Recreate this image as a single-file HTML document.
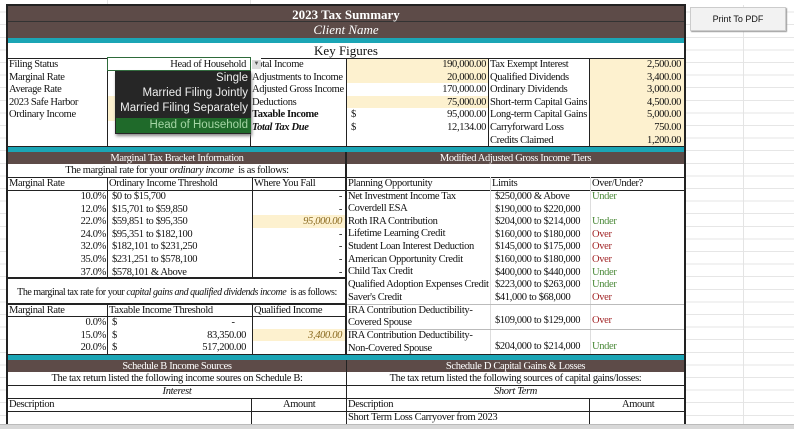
<!DOCTYPE html>
<html><head><meta charset="utf-8"><style>
body{margin:0;width:794px;height:429px;overflow:hidden;background:#fff;position:relative;font-family:"Liberation Serif",serif;font-size:10.5px;letter-spacing:-0.35px;color:#111}
div{position:absolute;box-sizing:border-box;white-space:nowrap}
.br{background:#5d4b48;color:#fff}
.tl{background:#1ba5b5}
.y{background:#fdf1cf}
.hl{border-top:1px solid #222}
.vl{border-left:1px solid #222}
.r{text-align:right}
.t{line-height:12px}
.g{color:#4c8a3a}.o{color:#a3282a}
.gl{background:#e4e4e4}
</style></head><body>
<div style="left:686px;top:0;width:108px;height:429px;background:repeating-linear-gradient(#fff 0 11.6px,#e6e6e6 11.6px 12.6px)"></div>
<div class="gl" style="left:743px;top:0;width:1px;height:429px"></div>
<div style="left:0;top:0;width:7px;height:429px;background:repeating-linear-gradient(#fff 0 11.6px,#e6e6e6 11.6px 12.6px)"></div>
<div style="left:0;top:0;width:794px;height:5px;background:#fff"></div>
<div style="left:107px;top:0;width:1px;height:5px;background:#e4e4e4"></div>
<div style="left:250px;top:0;width:1px;height:5px;background:#e4e4e4"></div>
<div style="left:690px;top:7px;width:96px;height:24px;background:#f2f2f2;border:1px solid #ccc;box-shadow:1px 1px 1px #999;font-family:'Liberation Sans',sans-serif;font-size:9px;letter-spacing:0;text-align:center;line-height:22px">Print To PDF</div>
<div style="left:6px;top:4px;width:680px;height:425px;border:2px solid #222;border-bottom:none"></div>
<div class="br" style="left:8px;top:6px;width:676px;height:16px;text-align:center;font-weight:bold;font-size:13px;letter-spacing:0;line-height:17px;border-bottom:1px solid #333">2023 Tax Summary</div>
<div class="br" style="left:8px;top:22px;width:676px;height:16px;text-align:center;font-style:italic;font-size:13px;letter-spacing:0;line-height:16px">Client Name</div>
<div class="tl" style="left:8px;top:38px;width:676px;height:5px"></div>
<div style="left:8px;top:43px;width:676px;height:15px;text-align:center;font-size:13px;letter-spacing:0;line-height:16px">Key Figures</div>
<div class="y" style="left:347px;top:58px;width:141px;height:25px"></div>
<div class="y" style="left:347px;top:96px;width:141px;height:12px"></div>
<div class="y" style="left:590px;top:58px;width:94px;height:89px"></div>
<div class="y" style="left:108px;top:96px;width:142px;height:25px"></div>
<div class="hl" style="left:8px;top:58px;width:676px;height:1px"></div>
<div class="vl" style="left:107px;top:58px;width:1px;height:89px"></div>
<div class="vl" style="left:250px;top:58px;width:1px;height:89px"></div>
<div class="vl" style="left:346px;top:58px;width:1px;height:89px"></div>
<div class="vl" style="left:488px;top:58px;width:1px;height:89px"></div>
<div class="vl" style="left:589px;top:58px;width:1px;height:89px"></div>
<div class="t" style="left:9px;top:59px;line-height:12.6px">Filing Status<br>Marginal Rate<br>Average Rate<br>2023 Safe Harbor<br>Ordinary Income</div>
<div class="t" style="left:252px;top:59px;line-height:12.6px">Total Income<br>Adjustments to Income<br>Adjusted Gross Income<br>Deductions<br><b>Taxable Income</b><br><b><i>Total Tax Due</i></b></div>
<div class="t" style="left:351px;top:109px;line-height:12.6px">$<br>$</div>
<div class="t r" style="left:347px;top:59px;width:139px;line-height:12.6px">190,000.00<br>20,000.00<br>170,000.00<br>75,000.00<br>95,000.00<br>12,134.00</div>
<div class="t" style="left:490px;top:59px;line-height:12.6px">Tax Exempt Interest<br>Qualified Dividends<br>Ordinary Dividends<br>Short-term Capital Gains<br>Long-term Capital Gains<br>Carryforward Loss<br>Credits Claimed</div>
<div class="t r" style="left:590px;top:59px;width:91px;line-height:12.6px">2,500.00<br>3,400.00<br>3,000.00<br>4,500.00<br>5,000.00<br>750.00<br>1,200.00</div>
<div style="left:107px;top:57px;width:144px;height:14px;border:1px solid #2e6b3a;background:#fff"></div>
<div class="t r" style="left:108px;top:59px;width:138px">Head of Household</div>
<div style="left:251px;top:58px;width:10px;height:12px;background:#fff"></div>
<div style="left:252px;top:60px;width:9px;height:9px;background:#ddd;font-size:6px;letter-spacing:0;text-align:center;line-height:9px;color:#555">▼</div>
<div style="left:115px;top:71px;width:136px;height:63px;background:#262626;box-shadow:1px 2px 3px #888"></div>
<div style="left:115px;top:71px;width:133px;font-family:'Liberation Sans',sans-serif;font-size:11.5px;letter-spacing:0;color:#eee;text-align:right;line-height:15px">Single<br>Married Filing Jointly<br>Married Filing Separately</div>
<div style="left:116px;top:118px;width:135px;height:15px;background:#1f6a2a;font-family:'Liberation Sans',sans-serif;font-size:11.5px;letter-spacing:0;color:#a5d6a5;text-align:right;padding-right:3px;line-height:15px">Head of Household</div>
<div class="hl" style="left:8px;top:146px;width:676px;height:1px"></div>
<div class="tl" style="left:8px;top:147px;width:676px;height:5px"></div>
<div class="br" style="left:8px;top:152px;width:338px;height:12px;text-align:center;line-height:13px">Marginal Tax Bracket Information</div>
<div class="br" style="left:347px;top:152px;width:337px;height:12px;text-align:center;line-height:13px">Modified Adjusted Gross Income Tiers</div>
<div style="left:345px;top:152px;width:2px;height:202px;background:#222"></div>
<div class="t" style="left:8px;top:165px;width:338px;text-align:center">The marginal rate for your <i>ordinary income</i> &nbsp;is as follows:</div>
<div style="left:8px;top:177px;width:676px;height:1px;background:#222"></div>
<div class="hl" style="left:8px;top:190px;width:676px;height:1px"></div>
<div class="vl" style="left:107px;top:177px;width:1px;height:101px"></div>
<div class="vl" style="left:252px;top:177px;width:1px;height:101px"></div>
<div class="vl" style="left:490px;top:177px;width:1px;height:177px;border-color:#ddd"></div>
<div class="vl" style="left:590px;top:177px;width:1px;height:177px;border-color:#ddd"></div>
<div class="y" style="left:253px;top:215px;width:92px;height:13px"></div>
<div class="t" style="left:9px;top:178px">Marginal Rate</div>
<div class="t" style="left:109px;top:178px">Ordinary Income Threshold</div>
<div class="t" style="left:254px;top:178px">Where You Fall</div>
<div class="t r" style="left:8px;top:191px;width:98px;line-height:12.6px">10.0%<br>12.0%<br>22.0%<br>24.0%<br>32.0%<br>35.0%<br>37.0%</div>
<div class="t" style="left:112px;top:191px;line-height:12.6px">$0 to $15,700<br>$15,701 to $59,850<br>$59,851 to $95,350<br>$95,351 to $182,100<br>$182,101 to $231,250<br>$231,251 to $578,100<br>$578,101 &amp; Above</div>
<div class="t r" style="left:253px;top:191px;width:89px;line-height:12.6px">-<br>-<br><i style="color:#8a6a20">95,000.00</i><br>-<br>-<br>-<br>-</div>
<div style="left:8px;top:277px;width:338px;height:2px;background:#222"></div>
<div class="t" style="left:8px;top:287px;width:338px;text-align:center;font-size:10px;letter-spacing:-0.45px">The marginal tax rate for your <i>capital gains and qualified dividends income</i> &nbsp;is as follows:</div>
<div style="left:8px;top:303px;width:338px;height:2px;background:#222"></div>
<div class="hl" style="left:8px;top:316px;width:338px;height:1px"></div>
<div class="vl" style="left:107px;top:303px;width:1px;height:51px"></div>
<div class="vl" style="left:252px;top:303px;width:1px;height:51px"></div>
<div class="y" style="left:253px;top:329px;width:92px;height:12px"></div>
<div class="t" style="left:9px;top:305px">Marginal Rate</div>
<div class="t" style="left:109px;top:305px">Taxable Income Threshold</div>
<div class="t" style="left:254px;top:305px">Qualified Income</div>
<div class="t r" style="left:8px;top:317px;width:98px;line-height:12.6px">0.0%<br>15.0%<br>20.0%</div>
<div class="t" style="left:112px;top:317px;line-height:12.6px">$<br>$<br>$</div>
<div class="t r" style="left:108px;top:317px;width:138px;line-height:12.6px">-&nbsp;&nbsp;&nbsp;&nbsp;&nbsp;<br>83,350.00<br>517,200.00</div>
<div class="t r" style="left:253px;top:330px;width:89px"><i style="color:#8a6a20">3,400.00</i></div>
<div class="t" style="left:348px;top:178px;line-height:12.6px">Planning Opportunity<br>Net Investment Income Tax<br>Coverdell ESA<br>Roth IRA Contribution<br>Lifetime Learning Credit<br>Student Loan Interest Deduction<br>American Opportunity Credit<br>Child Tax Credit</div>
<div class="t" style="left:348px;top:279px;line-height:12.8px">Qualified Adoption Expenses Credit<br>Saver's Credit<br>IRA Contribution Deductibility-<br>Covered Spouse<br>IRA Contribution Deductibility-<br>Non-Covered Spouse</div>
<div class="t" style="left:492px;top:178px">Limits</div>
<div class="t" style="left:495px;top:191px;line-height:12.6px">$250,000 &amp; Above<br>$190,000 to $220,000<br>$204,000 to $214,000<br>$160,000 to $180,000<br>$145,000 to $175,000<br>$160,000 to $180,000<br>$400,000 to $440,000</div>
<div class="t" style="left:495px;top:279px;line-height:12.8px">$223,000 to $263,000<br>$41,000 to $68,000</div>
<div class="t" style="left:495px;top:315px">$109,000 to $129,000</div>
<div class="t" style="left:495px;top:341px">$204,000 to $214,000</div>
<div class="t" style="left:592px;top:178px">Over/Under?</div>
<div class="t" style="left:592px;top:191px;line-height:12.6px"><span class="g">Under</span><br>&nbsp;<br><span class="g">Under</span><br><span class="o">Over</span><br><span class="o">Over</span><br><span class="o">Over</span><br><span class="g">Under</span></div>
<div class="t" style="left:592px;top:279px;line-height:12.8px"><span class="g">Under</span><br><span class="o">Over</span></div>
<div class="t o" style="left:592px;top:315px">Over</div>
<div class="t g" style="left:592px;top:341px">Under</div>
<div class="hl" style="left:347px;top:304px;width:337px;height:1px;border-color:#bbb"></div>
<div class="hl" style="left:347px;top:329px;width:337px;height:1px;border-color:#bbb"></div>
<div class="hl" style="left:8px;top:354px;width:676px;height:1px"></div>
<div class="tl" style="left:8px;top:355px;width:676px;height:5px"></div>
<div class="br" style="left:8px;top:360px;width:338px;height:12px;text-align:center;line-height:13px">Schedule B Income Sources</div>
<div class="br" style="left:347px;top:360px;width:337px;height:12px;text-align:center;line-height:13px">Schedule D Capital Gains &amp; Losses</div>
<div style="left:346px;top:360px;width:1px;height:69px;background:#222"></div>
<div class="t" style="left:8px;top:373px;width:338px;text-align:center">The tax return listed the following income soures on Schedule B:</div>
<div class="t" style="left:347px;top:373px;width:337px;text-align:center">The tax return listed the following sources of capital gains/losses:</div>
<div class="hl" style="left:8px;top:385px;width:676px;height:1px"></div>
<div class="t" style="left:8px;top:386px;width:338px;text-align:center;font-style:italic">Interest</div>
<div class="t" style="left:347px;top:386px;width:337px;text-align:center;font-style:italic">Short Term</div>
<div class="hl" style="left:8px;top:398px;width:676px;height:1px"></div>
<div class="hl" style="left:8px;top:411px;width:676px;height:1px"></div>
<div class="vl" style="left:251px;top:398px;width:1px;height:31px"></div>
<div class="vl" style="left:589px;top:398px;width:1px;height:31px"></div>
<div class="t" style="left:9px;top:399px">Description</div>
<div class="t" style="left:283px;top:399px">Amount</div>
<div class="t" style="left:348px;top:399px">Description</div>
<div class="t" style="left:622px;top:399px">Amount</div>
<div class="t" style="left:348px;top:412px">Short Term Loss Carryover from 2023</div>
<div style="left:0;top:424px;width:794px;height:5px;background:#d8d8d8;border-top:1px solid #bbb"></div>
</body></html>
